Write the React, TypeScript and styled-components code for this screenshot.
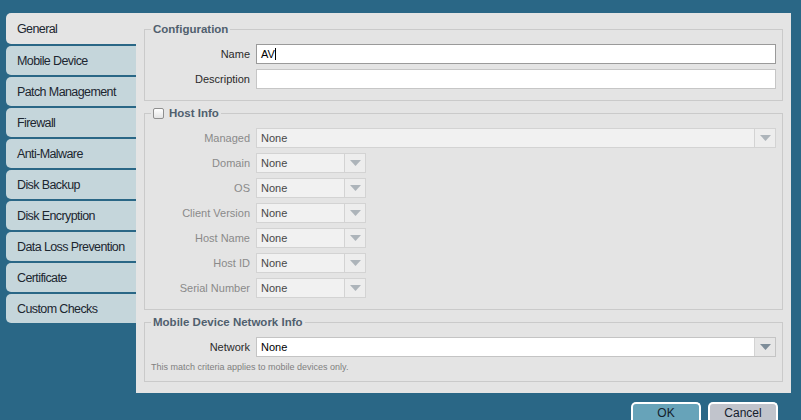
import styled, {createGlobalStyle} from 'styled-components';

const GlobalStyle = createGlobalStyle`
  html, body {
    margin: 0;
    padding: 0;
    background: #2a6786;
  }
  body {
    font-family: "Liberation Sans", Arial, sans-serif;
    overflow: hidden;
  }
`;

const Page = styled.div`
  width: 801px;
  height: 420px;
  box-sizing: border-box;
  padding: 13px 0 0 6px;
  overflow: hidden;
`;

const Dialog = styled.div`
  display: flex;
  align-items: flex-start;
`;

const TabList = styled.div`
  width: 130px;
  display: flex;
  flex-direction: column;
  gap: 2px;
`;

const Tab = styled.div<{$active?: boolean}>`
  height: ${p => (p.$active ? 31 : 29)}px;
  display: flex;
  align-items: center;
  padding-left: 11px;
  background: ${p => (p.$active ? '#e4e4e4' : '#c5d6db')};
  border-radius: 5px 0 0 5px;
  font-size: 12.5px;
  letter-spacing: -0.6px;
  color: #1c2630;
  white-space: nowrap;
`;

const Panel = styled.div`
  width: 655px;
  box-sizing: border-box;
  background: #e4e4e4;
  padding: 9px 8px 11px 8px;
  display: flex;
  flex-direction: column;
  gap: 5px;
`;

const Group = styled.fieldset<{$bottom?: number}>`
  margin: 0;
  min-width: 0;
  border: 1px solid #cacaca;
  padding: 8px 6px ${p => p.$bottom ?? 11}px 6px;
`;

const Legend = styled.legend`
  padding: 0 2px;
  height: 14px;
  line-height: 14px;
  display: flex;
  align-items: center;
  gap: 5px;
  font-size: 11.5px;
  font-weight: bold;
  color: #505f6e;
`;

const Check = styled.span`
  width: 11px;
  height: 11px;
  box-sizing: border-box;
  border: 1px solid #8f8f8f;
  border-radius: 2px;
  background: linear-gradient(#ffffff, #e4e4e4);
`;

const Rows = styled.div`
  display: grid;
  grid-template-columns: 99px 1fr;
  column-gap: 6px;
  row-gap: 5px;
  align-items: center;
`;

const Label = styled.div<{$disabled?: boolean}>`
  text-align: right;
  font-size: 11px;
  color: ${p => (p.$disabled ? '#8a8a8a' : '#2a2a2a')};
  white-space: nowrap;
`;

const TextBox = styled.div<{$focused?: boolean}>`
  height: 20px;
  box-sizing: border-box;
  border: 1px solid ${p => (p.$focused ? '#9a9a9a' : '#c6c6c6')};
  background: #fff;
  padding-left: 4px;
  display: flex;
  align-items: center;
  font-size: 11px;
  color: #000;
`;

const Caret = styled.span`
  width: 1px;
  height: 12px;
  background: #000;
`;

const SelectBox = styled.div<{$disabled?: boolean; $wide?: boolean}>`
  width: ${p => (p.$wide ? '100%' : '110px')};
  height: 20px;
  box-sizing: border-box;
  display: flex;
  border: 1px solid ${p => (p.$disabled ? '#d3d3d3' : '#c4c4c4')};
  background: ${p => (p.$disabled ? '#f1f1f1' : '#ffffff')};
`;

const SelectValue = styled.div<{$disabled?: boolean}>`
  flex: 1;
  padding-left: 4px;
  line-height: 18px;
  font-size: 11px;
  color: ${p => (p.$disabled ? '#484848' : '#000')};
`;

const SelectArrow = styled.div<{$disabled?: boolean}>`
  width: 20px;
  border-left: 1px solid #d3d3d3;
  background: ${p => (p.$disabled ? '#ededed' : '#e6e6e6')};
  display: flex;
  align-items: center;
  justify-content: center;
`;

const Hint = styled.div`
  margin-top: 5px;
  font-size: 9px;
  line-height: 11px;
  color: #808080;
`;

const ButtonBar = styled.div`
  display: flex;
  justify-content: flex-end;
  gap: 7px;
  margin-top: 9px;
  padding-right: 23px;
`;

const DialogButton = styled.button<{$primary?: boolean}>`
  width: 70px;
  height: 18px;
  box-sizing: border-box;
  border: 2px solid #ffffff;
  border-bottom: none;
  border-radius: 5px 5px 0 0;
  background: ${p => (p.$primary ? '#67a3b9' : '#c1c4cc')};
  font-family: "Liberation Sans", Arial, sans-serif;
  font-size: 12px;
  line-height: 12px;
  color: #14202c;
  padding: 3px 0 0 0;
  display: flex;
  justify-content: center;
  align-items: flex-start;
`;

function Select({disabled, wide}: {disabled?: boolean; wide?: boolean}) {
  return (
    <SelectBox $disabled={disabled} $wide={wide}>
      <SelectValue $disabled={disabled}>None</SelectValue>
      <SelectArrow $disabled={disabled}>
        <svg width="11" height="6" viewBox="0 0 11 6">
          <polygon points="0,0 11,0 5.5,6" fill={disabled ? '#adb4ba' : '#7e8d99'} />
        </svg>
      </SelectArrow>
    </SelectBox>
  );
}

const tabs = [
  'General',
  'Mobile Device',
  'Patch Management',
  'Firewall',
  'Anti-Malware',
  'Disk Backup',
  'Disk Encryption',
  'Data Loss Prevention',
  'Certificate',
  'Custom Checks',
];

const hostFields: [string, boolean][] = [
  ['Managed', true],
  ['Domain', false],
  ['OS', false],
  ['Client Version', false],
  ['Host Name', false],
  ['Host ID', false],
  ['Serial Number', false],
];

function Row({name, wide}: {name: string; wide: boolean}) {
  return (
    <>
      <Label $disabled>{name}</Label>
      <Select disabled wide={wide} />
    </>
  );
}

export default function App() {
  return (
    <>
      <GlobalStyle />
      <Page>
        <Dialog>
          <TabList>
            {tabs.map((t, i) => (
              <Tab key={t} $active={i === 0}>
                {t}
              </Tab>
            ))}
          </TabList>
          <Panel>
            <Group>
              <Legend>Configuration</Legend>
              <Rows>
                <Label>Name</Label>
                <TextBox $focused>
                  AV
                  <Caret />
                </TextBox>
                <Label>Description</Label>
                <TextBox />
              </Rows>
            </Group>
            <Group>
              <Legend>
                <Check />
                Host Info
              </Legend>
              <Rows>
                {hostFields.map(([name, wide]) => (
                  <Row key={name} name={name} wide={wide} />
                ))}
              </Rows>
            </Group>
            <Group $bottom={8}>
              <Legend>Mobile Device Network Info</Legend>
              <Rows>
                <Label>Network</Label>
                <Select wide />
              </Rows>
              <Hint>This match criteria applies to mobile devices only.</Hint>
            </Group>
          </Panel>
        </Dialog>
        <ButtonBar>
          <DialogButton $primary>OK</DialogButton>
          <DialogButton>Cancel</DialogButton>
        </ButtonBar>
      </Page>
    </>
  );
}
